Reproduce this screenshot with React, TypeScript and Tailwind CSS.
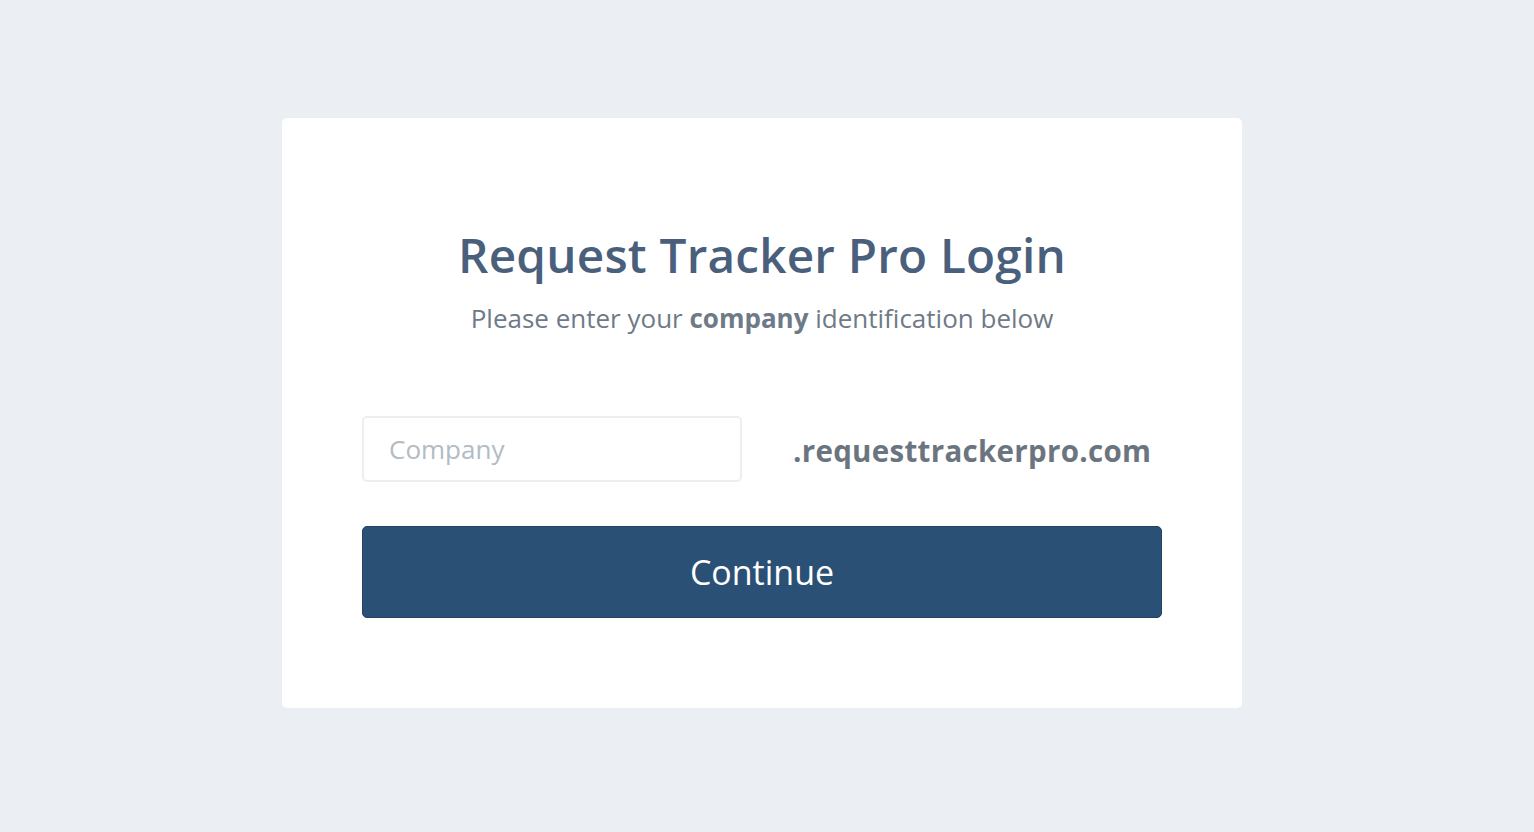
export default function App() {
    return (
        <div className="min-h-screen w-full bg-[#ebeef3] flex items-start justify-center pt-[118px] font-['Open_Sans',sans-serif]">
            <div className="w-[960px] h-[590px] mr-[10px] bg-white rounded-[5px] flex flex-col items-center px-20 pt-[107px]">
                <h1 className="text-[47.7px] leading-[60px] font-semibold text-[#4a5f7c] tracking-[0.2px]">
                    Request Tracker Pro Login
                </h1>
                <p className="mt-[17px] text-[26px] leading-8 text-[#6e7a87]">
                    Please enter your <span className="font-bold">company</span> identification below
                </p>

                <div className="mt-[82px] w-full flex items-center">
                    <input
                        type="text"
                        placeholder="Company"
                        className="w-[380px] h-[66px] rounded-[5px] border-2 border-[#eceef0] px-[25px] text-[26px] text-[#4a5f7c] placeholder:text-[#b3bbc3] outline-none"
                    />
                    <span className="ml-[51px] text-[29.5px] font-bold text-[#6b7580] tracking-[0.3px] pt-1">
                        .requesttrackerpro.com
                    </span>
                </div>

                <button className="mt-[44px] w-full h-[92px] rounded-[5px] bg-[#2b5075] border border-[#244466] text-white text-[34px]">
                    Continue
                </button>
            </div>
        </div>
    )
}
